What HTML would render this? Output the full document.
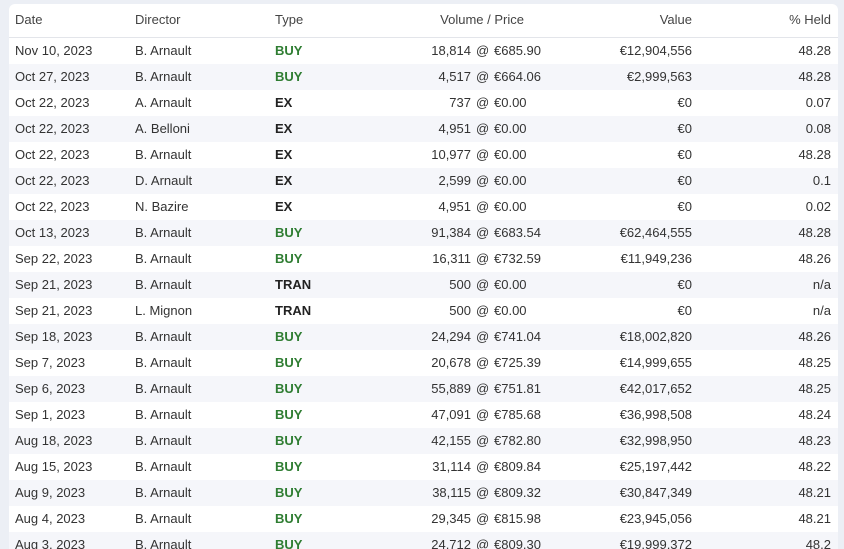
<!DOCTYPE html>
<html><head><style>
html,body{margin:0;width:844px;height:549px;overflow:hidden}
body{background:#eceff5;font-family:"Liberation Sans",sans-serif;font-size:13px;color:#333;position:relative}
.card{position:absolute;left:9px;top:4px;width:829px;height:545px;background:#fff;border-radius:6px 6px 0 0;overflow:hidden}
.r{position:absolute;left:0;width:829px;height:26px;line-height:26px}
.h{height:33px;line-height:32px;top:0;border-bottom:1px solid #e3e5ea;color:#444}
.s{background:#f5f6fa}
.r span{position:absolute;white-space:nowrap}
.d{left:6px}.di{left:126px}.t{left:266px}
.v{right:367px;text-align:right}.at{left:467px}.p{left:485px}
.va{right:146px}.ph{right:7px}
.buy{color:#2f7d32;font-weight:bold}.ex{font-weight:bold;color:#222}
</style></head><body><div class="card">
<div class="r h"><span class="d">Date</span><span class="di">Director</span><span class="t">Type</span><span style="right:314px">Volume / Price</span><span class="va">Value</span><span class="ph">% Held</span></div>
<div class="r" style="top:34px"><span class="d">Nov 10, 2023</span><span class="di">B. Arnault</span><span class="t buy">BUY</span><span class="v">18,814</span><span class="at">@</span><span class="p">€685.90</span><span class="va">€12,904,556</span><span class="ph">48.28</span></div>
<div class="r s" style="top:60px"><span class="d">Oct 27, 2023</span><span class="di">B. Arnault</span><span class="t buy">BUY</span><span class="v">4,517</span><span class="at">@</span><span class="p">€664.06</span><span class="va">€2,999,563</span><span class="ph">48.28</span></div>
<div class="r" style="top:86px"><span class="d">Oct 22, 2023</span><span class="di">A. Arnault</span><span class="t ex">EX</span><span class="v">737</span><span class="at">@</span><span class="p">€0.00</span><span class="va">€0</span><span class="ph">0.07</span></div>
<div class="r s" style="top:112px"><span class="d">Oct 22, 2023</span><span class="di">A. Belloni</span><span class="t ex">EX</span><span class="v">4,951</span><span class="at">@</span><span class="p">€0.00</span><span class="va">€0</span><span class="ph">0.08</span></div>
<div class="r" style="top:138px"><span class="d">Oct 22, 2023</span><span class="di">B. Arnault</span><span class="t ex">EX</span><span class="v">10,977</span><span class="at">@</span><span class="p">€0.00</span><span class="va">€0</span><span class="ph">48.28</span></div>
<div class="r s" style="top:164px"><span class="d">Oct 22, 2023</span><span class="di">D. Arnault</span><span class="t ex">EX</span><span class="v">2,599</span><span class="at">@</span><span class="p">€0.00</span><span class="va">€0</span><span class="ph">0.1</span></div>
<div class="r" style="top:190px"><span class="d">Oct 22, 2023</span><span class="di">N. Bazire</span><span class="t ex">EX</span><span class="v">4,951</span><span class="at">@</span><span class="p">€0.00</span><span class="va">€0</span><span class="ph">0.02</span></div>
<div class="r s" style="top:216px"><span class="d">Oct 13, 2023</span><span class="di">B. Arnault</span><span class="t buy">BUY</span><span class="v">91,384</span><span class="at">@</span><span class="p">€683.54</span><span class="va">€62,464,555</span><span class="ph">48.28</span></div>
<div class="r" style="top:242px"><span class="d">Sep 22, 2023</span><span class="di">B. Arnault</span><span class="t buy">BUY</span><span class="v">16,311</span><span class="at">@</span><span class="p">€732.59</span><span class="va">€11,949,236</span><span class="ph">48.26</span></div>
<div class="r s" style="top:268px"><span class="d">Sep 21, 2023</span><span class="di">B. Arnault</span><span class="t ex">TRAN</span><span class="v">500</span><span class="at">@</span><span class="p">€0.00</span><span class="va">€0</span><span class="ph">n/a</span></div>
<div class="r" style="top:294px"><span class="d">Sep 21, 2023</span><span class="di">L. Mignon</span><span class="t ex">TRAN</span><span class="v">500</span><span class="at">@</span><span class="p">€0.00</span><span class="va">€0</span><span class="ph">n/a</span></div>
<div class="r s" style="top:320px"><span class="d">Sep 18, 2023</span><span class="di">B. Arnault</span><span class="t buy">BUY</span><span class="v">24,294</span><span class="at">@</span><span class="p">€741.04</span><span class="va">€18,002,820</span><span class="ph">48.26</span></div>
<div class="r" style="top:346px"><span class="d">Sep 7, 2023</span><span class="di">B. Arnault</span><span class="t buy">BUY</span><span class="v">20,678</span><span class="at">@</span><span class="p">€725.39</span><span class="va">€14,999,655</span><span class="ph">48.25</span></div>
<div class="r s" style="top:372px"><span class="d">Sep 6, 2023</span><span class="di">B. Arnault</span><span class="t buy">BUY</span><span class="v">55,889</span><span class="at">@</span><span class="p">€751.81</span><span class="va">€42,017,652</span><span class="ph">48.25</span></div>
<div class="r" style="top:398px"><span class="d">Sep 1, 2023</span><span class="di">B. Arnault</span><span class="t buy">BUY</span><span class="v">47,091</span><span class="at">@</span><span class="p">€785.68</span><span class="va">€36,998,508</span><span class="ph">48.24</span></div>
<div class="r s" style="top:424px"><span class="d">Aug 18, 2023</span><span class="di">B. Arnault</span><span class="t buy">BUY</span><span class="v">42,155</span><span class="at">@</span><span class="p">€782.80</span><span class="va">€32,998,950</span><span class="ph">48.23</span></div>
<div class="r" style="top:450px"><span class="d">Aug 15, 2023</span><span class="di">B. Arnault</span><span class="t buy">BUY</span><span class="v">31,114</span><span class="at">@</span><span class="p">€809.84</span><span class="va">€25,197,442</span><span class="ph">48.22</span></div>
<div class="r s" style="top:476px"><span class="d">Aug 9, 2023</span><span class="di">B. Arnault</span><span class="t buy">BUY</span><span class="v">38,115</span><span class="at">@</span><span class="p">€809.32</span><span class="va">€30,847,349</span><span class="ph">48.21</span></div>
<div class="r" style="top:502px"><span class="d">Aug 4, 2023</span><span class="di">B. Arnault</span><span class="t buy">BUY</span><span class="v">29,345</span><span class="at">@</span><span class="p">€815.98</span><span class="va">€23,945,056</span><span class="ph">48.21</span></div>
<div class="r s" style="top:528px"><span class="d">Aug 3, 2023</span><span class="di">B. Arnault</span><span class="t buy">BUY</span><span class="v">24,712</span><span class="at">@</span><span class="p">€809.30</span><span class="va">€19,999,372</span><span class="ph">48.2</span></div>
</div>
</body></html>
